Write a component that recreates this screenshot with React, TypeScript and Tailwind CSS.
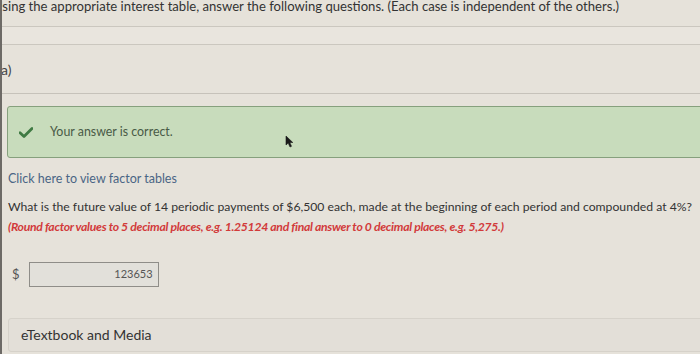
import React from "react";

function CheckIcon() {
  return (
    <svg width="14" height="11" viewBox="0 0 14 11" className="shrink-0">
      <path d="M1 5.8 L5 9.5 L13 1.5" fill="none" stroke="#3f7a43" strokeWidth="2.8" strokeLinecap="round" strokeLinejoin="round" />
    </svg>
  );
}

function Cursor() {
  return (
    <svg width="9" height="13" viewBox="0 0 9 13" className="absolute left-[283px] top-[135px]">
      <path d="M1 1 L1 10 L3.2 8 L5 12 L6.5 11.3 L4.8 7.5 L7.8 7.5 Z" fill="#1a1a1a" stroke="#1a1a1a" strokeWidth="0.6" />
    </svg>
  );
}

export default function App() {
  return (
    <div
      className="relative w-[700px] h-[354px] overflow-hidden bg-[#e6e2da] border-l-2 border-[#6d6a66] text-[#3a3a3a]"
      style={{ fontFamily: "Lato, 'Open Sans', sans-serif" }}
    >
      <div className="h-[29px] border-b border-[#cbc7bf]">
        <p className="-ml-[9px] -mt-[2px] text-[13.1px] leading-[16px] whitespace-nowrap text-[#333]">
          Using the appropriate interest table, answer the following questions. (Each case is independent of the others.)
        </p>
      </div>
      <div className="h-[18px] border-b border-[#cbc7bf] bg-[#e9e5de]" />
      <div className="h-[49px] border-b border-[#c6c2ba] flex items-center -ml-[1px] text-[14px] text-[#444]">
        a)
      </div>

      <div className="mt-[12px] ml-[5px] -mr-[10px] h-[52px] bg-[#c8dcbc] border border-[#86a07d] rounded-[3px] flex items-center gap-[17px] pl-[11px]">
        <CheckIcon />
        <span className="text-[12.4px] text-[#485a46]">Your answer is correct.</span>
      </div>
      <Cursor />

      <div className="mt-[12px] ml-[6px] text-[12.5px] text-[#4a6585]">Click here to view factor tables</div>

      <div className="mt-[8px] ml-[6px] text-[12.2px] leading-[20px] whitespace-nowrap">
        <p className="text-[#333]">
          What is the future value of 14 periodic payments of $6,500 each, made at the beginning of each period and compounded at 4%?
        </p>
        <p className="italic font-bold text-[#d23a3a] tracking-[-0.3px]">
          (Round factor values to 5 decimal places, e.g. 1.25124 and final answer to 0 decimal places, e.g. 5,275.)
        </p>
      </div>

      <div className="mt-[25px] ml-[10px] flex items-center gap-[9px]">
        <span className="text-[13px] text-[#555]">$</span>
        <div className="w-[130px] h-[25px] bg-[#e2e0da] border border-[#8f8d88] flex items-center justify-end pr-[5px] text-[11px] text-[#555]">
          123653
        </div>
      </div>

      <div className="mt-[31px] ml-[6px] -mr-[10px] h-[34px] bg-[#e3dfd8] border border-[#d6d2ca] rounded-[3px] flex items-center pl-[12px] text-[14px] text-[#333]">
        eTextbook and Media
      </div>
    </div>
  );
}
